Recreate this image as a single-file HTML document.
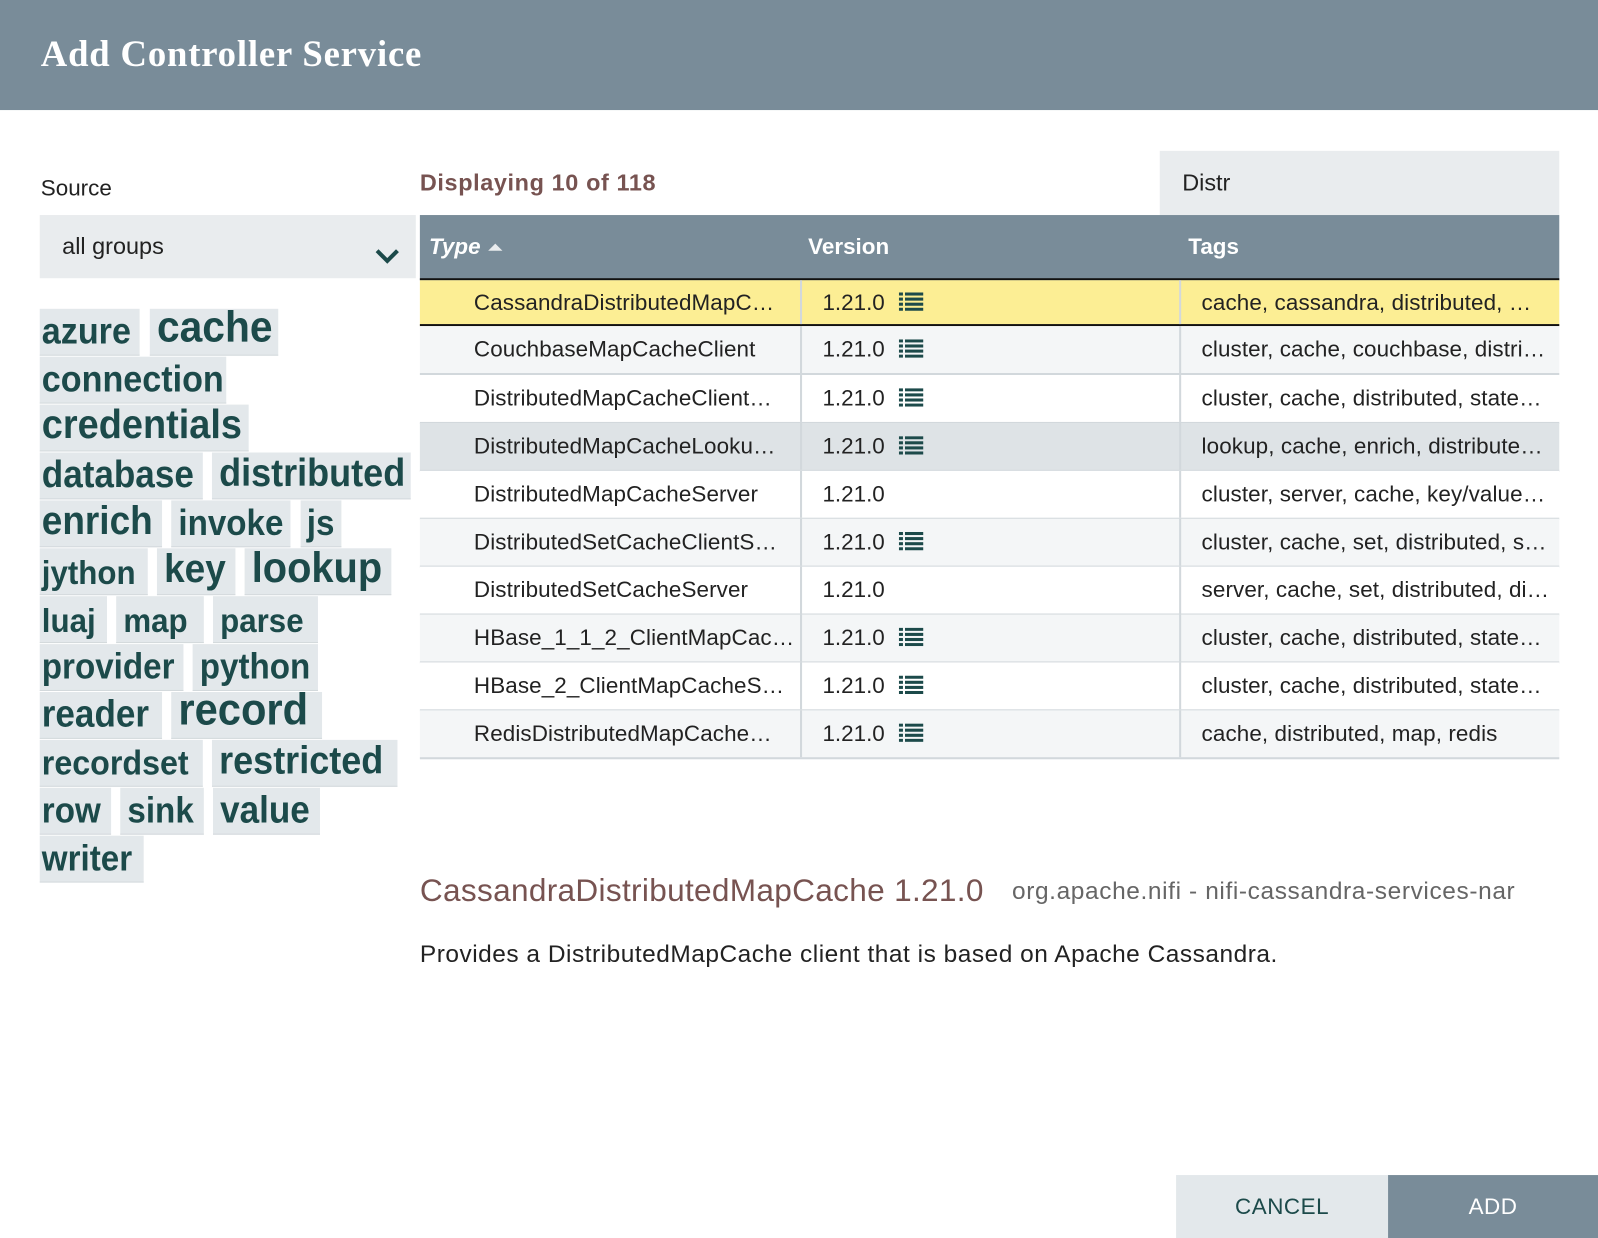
<!DOCTYPE html>
<html><head><meta charset="utf-8"><style>
html,body{margin:0;padding:0;background:#fff;overflow:hidden;width:1598px;height:1238px}
#w{position:absolute;left:0;top:0;width:1568px;height:1215px;transform:scale(1.01913);transform-origin:0 0;font-family:"Liberation Sans",sans-serif}
.a{position:absolute}
.hdr{left:0;top:0;width:1568px;height:108px;background:#798c99}
.title{left:40px;top:32px;color:#fff;font:bold 36px "Liberation Serif",serif;letter-spacing:0.8px}
.tag{position:absolute;background:#e3e8eb;height:45px;color:#1c4a4a;font-weight:bold;white-space:nowrap;overflow:visible;border-bottom:1px solid #d3d9dc}
.tag span{position:absolute;left:2px;bottom:5px;display:inline-block;transform:scaleX(0.93);transform-origin:0 100%;line-height:1}
.row{position:absolute;left:412px;width:1118px;height:46px;border-bottom:2px solid #d2d8dc;font-size:22px;color:#222}
.row div{position:absolute;top:0;line-height:46px;white-space:nowrap}
.c1{left:53px}.c2{left:395px}.c3{left:767px}
.c1,.c3{letter-spacing:0.1px}
.ic{display:inline-block;vertical-align:middle;margin-left:14px;margin-top:-4px}
.vl{position:absolute;top:0;width:2px;height:100%;background:#d2d8dc}
</style></head><body><div id="w">
<div class="a hdr"></div>
<div class="a title">Add Controller Service</div>

<div class="a" style="left:40px;top:172px;font-size:22px;color:#222">Source</div>
<div class="a" style="left:39px;top:211px;width:369px;height:62px;background:#e9ecee"></div>
<div class="a" style="left:61px;top:228px;font-size:23px;color:#222">all groups</div>
<svg class="a" style="left:368px;top:243px" width="24" height="16" viewBox="0 0 24 16"><path d="M2 3 L12 13 L22 3" fill="none" stroke="#1c4a4a" stroke-width="4"/></svg>

<div class="tag" style="left:39px;top:303px;width:98px"><span style="font-size:36px">azure</span></div>
<div class="tag" style="left:147px;top:303px;width:126px"><span style="font-size:43px;left:7px">cache</span></div>
<div class="tag" style="left:39px;top:350px;width:183px"><span style="font-size:36px">connection</span></div>
<div class="tag" style="left:39px;top:397px;width:205px"><span style="font-size:40px">credentials</span></div>
<div class="tag" style="left:39px;top:444px;width:160px"><span style="font-size:37px">database</span></div>
<div class="tag" style="left:208px;top:444px;width:195px"><span style="font-size:38px;left:7px">distributed</span></div>
<div class="tag" style="left:39px;top:491px;width:120px"><span style="font-size:39px">enrich</span></div>
<div class="tag" style="left:168px;top:491px;width:117px"><span style="font-size:35px;left:7px">invoke</span></div>
<div class="tag" style="left:295px;top:491px;width:40px"><span style="font-size:35px;left:6px">js</span></div>
<div class="tag" style="left:39px;top:538px;width:106px"><span style="font-size:33px">jython</span></div>
<div class="tag" style="left:154px;top:538px;width:77px"><span style="font-size:39px;left:7px">key</span></div>
<div class="tag" style="left:240px;top:538px;width:144px"><span style="font-size:42px;left:7px">lookup</span></div>
<div class="tag" style="left:39px;top:585px;width:66px"><span style="font-size:33px">luaj</span></div>
<div class="tag" style="left:114px;top:585px;width:86px"><span style="font-size:33px;left:7px">map</span></div>
<div class="tag" style="left:209px;top:585px;width:103px"><span style="font-size:33px;left:7px">parse</span></div>
<div class="tag" style="left:39px;top:632px;width:141px"><span style="font-size:35px">provider</span></div>
<div class="tag" style="left:189px;top:632px;width:123px"><span style="font-size:35px;left:7px">python</span></div>
<div class="tag" style="left:39px;top:679px;width:120px"><span style="font-size:37px">reader</span></div>
<div class="tag" style="left:168px;top:679px;width:148px"><span style="font-size:44px;left:7px">record</span></div>
<div class="tag" style="left:39px;top:726px;width:160px"><span style="font-size:34px">recordset</span></div>
<div class="tag" style="left:208px;top:726px;width:182px"><span style="font-size:38px;left:7px">restricted</span></div>
<div class="tag" style="left:39px;top:773px;width:70px"><span style="font-size:35px">row</span></div>
<div class="tag" style="left:118px;top:773px;width:82px"><span style="font-size:35px;left:7px">sink</span></div>
<div class="tag" style="left:209px;top:773px;width:105px"><span style="font-size:37px;left:7px">value</span></div>
<div class="tag" style="left:39px;top:820px;width:102px"><span style="font-size:35px">writer</span></div>

<div class="a" style="left:412px;top:166px;font-size:23px;color:#775351;font-weight:bold;letter-spacing:0.6px">Displaying 10 of 118</div>
<div class="a" style="left:1138px;top:148px;width:392px;height:63px;background:#e9ecee"></div>
<div class="a" style="left:1160px;top:166px;font-size:23px;color:#222">Distr</div>

<div class="a" style="left:412px;top:211px;width:1118px;height:62px;background:#798c99;border-bottom:2px solid #111"></div>
<div class="a" style="left:421px;top:229px;font-size:22px;color:#fff;font-style:italic;font-weight:bold">Type</div>
<svg class="a" style="left:478px;top:237px" width="16" height="10"><path d="M1 9 L8 2 L15 9Z" fill="#e9ecee"/></svg>
<div class="a" style="left:793px;top:229px;font-size:22px;color:#fff;font-weight:bold">Version</div>
<div class="a" style="left:1166px;top:229px;font-size:22px;color:#fff;font-weight:bold">Tags</div>

<div class="row" style="top:275px;height:43px;background:#fcee94;border-bottom:2px solid #111"><div class="c1" style="line-height:43px">CassandraDistributedMapC…</div><div class="c2" style="line-height:43px">1.21.0<svg class="ic" width="24" height="18"><g fill="#1c4a4a"><rect x="0" y="0" width="4" height="3"/><rect x="6" y="0" width="18" height="3"/><rect x="0" y="5" width="4" height="3"/><rect x="6" y="5" width="18" height="3"/><rect x="0" y="10" width="4" height="3"/><rect x="6" y="10" width="18" height="3"/><rect x="0" y="15" width="4" height="3"/><rect x="6" y="15" width="18" height="3"/></g></svg></div><div class="c3" style="line-height:43px">cache, cassandra, distributed, …</div><span class="vl" style="left:373px"></span><span class="vl" style="left:745px"></span></div>

<div class="row" style="top:320px;background:#f4f6f7"><div class="c1">CouchbaseMapCacheClient</div><div class="c2">1.21.0<svg class="ic" width="24" height="18"><g fill="#1c4a4a"><rect x="0" y="0" width="4" height="3"/><rect x="6" y="0" width="18" height="3"/><rect x="0" y="5" width="4" height="3"/><rect x="6" y="5" width="18" height="3"/><rect x="0" y="10" width="4" height="3"/><rect x="6" y="10" width="18" height="3"/><rect x="0" y="15" width="4" height="3"/><rect x="6" y="15" width="18" height="3"/></g></svg></div><div class="c3">cluster, cache, couchbase, distri…</div><span class="vl" style="left:373px"></span><span class="vl" style="left:745px"></span></div>

<div class="row" style="top:368px;background:#fff"><div class="c1">DistributedMapCacheClient…</div><div class="c2">1.21.0<svg class="ic" width="24" height="18"><g fill="#1c4a4a"><rect x="0" y="0" width="4" height="3"/><rect x="6" y="0" width="18" height="3"/><rect x="0" y="5" width="4" height="3"/><rect x="6" y="5" width="18" height="3"/><rect x="0" y="10" width="4" height="3"/><rect x="6" y="10" width="18" height="3"/><rect x="0" y="15" width="4" height="3"/><rect x="6" y="15" width="18" height="3"/></g></svg></div><div class="c3">cluster, cache, distributed, state…</div><span class="vl" style="left:373px"></span><span class="vl" style="left:745px"></span></div>

<div class="row" style="top:415px;background:#dee3e6"><div class="c1">DistributedMapCacheLooku…</div><div class="c2">1.21.0<svg class="ic" width="24" height="18"><g fill="#1c4a4a"><rect x="0" y="0" width="4" height="3"/><rect x="6" y="0" width="18" height="3"/><rect x="0" y="5" width="4" height="3"/><rect x="6" y="5" width="18" height="3"/><rect x="0" y="10" width="4" height="3"/><rect x="6" y="10" width="18" height="3"/><rect x="0" y="15" width="4" height="3"/><rect x="6" y="15" width="18" height="3"/></g></svg></div><div class="c3">lookup, cache, enrich, distribute…</div><span class="vl" style="left:373px"></span><span class="vl" style="left:745px"></span></div>

<div class="row" style="top:462px;background:#fff"><div class="c1">DistributedMapCacheServer</div><div class="c2">1.21.0</div><div class="c3">cluster, server, cache, key/value…</div><span class="vl" style="left:373px"></span><span class="vl" style="left:745px"></span></div>

<div class="row" style="top:509px;background:#f4f6f7"><div class="c1">DistributedSetCacheClientS…</div><div class="c2">1.21.0<svg class="ic" width="24" height="18"><g fill="#1c4a4a"><rect x="0" y="0" width="4" height="3"/><rect x="6" y="0" width="18" height="3"/><rect x="0" y="5" width="4" height="3"/><rect x="6" y="5" width="18" height="3"/><rect x="0" y="10" width="4" height="3"/><rect x="6" y="10" width="18" height="3"/><rect x="0" y="15" width="4" height="3"/><rect x="6" y="15" width="18" height="3"/></g></svg></div><div class="c3">cluster, cache, set, distributed, s…</div><span class="vl" style="left:373px"></span><span class="vl" style="left:745px"></span></div>

<div class="row" style="top:556px;background:#fff"><div class="c1">DistributedSetCacheServer</div><div class="c2">1.21.0</div><div class="c3">server, cache, set, distributed, di…</div><span class="vl" style="left:373px"></span><span class="vl" style="left:745px"></span></div>

<div class="row" style="top:603px;background:#f4f6f7"><div class="c1">HBase_1_1_2_ClientMapCac…</div><div class="c2">1.21.0<svg class="ic" width="24" height="18"><g fill="#1c4a4a"><rect x="0" y="0" width="4" height="3"/><rect x="6" y="0" width="18" height="3"/><rect x="0" y="5" width="4" height="3"/><rect x="6" y="5" width="18" height="3"/><rect x="0" y="10" width="4" height="3"/><rect x="6" y="10" width="18" height="3"/><rect x="0" y="15" width="4" height="3"/><rect x="6" y="15" width="18" height="3"/></g></svg></div><div class="c3">cluster, cache, distributed, state…</div><span class="vl" style="left:373px"></span><span class="vl" style="left:745px"></span></div>

<div class="row" style="top:650px;background:#fff"><div class="c1">HBase_2_ClientMapCacheS…</div><div class="c2">1.21.0<svg class="ic" width="24" height="18"><g fill="#1c4a4a"><rect x="0" y="0" width="4" height="3"/><rect x="6" y="0" width="18" height="3"/><rect x="0" y="5" width="4" height="3"/><rect x="6" y="5" width="18" height="3"/><rect x="0" y="10" width="4" height="3"/><rect x="6" y="10" width="18" height="3"/><rect x="0" y="15" width="4" height="3"/><rect x="6" y="15" width="18" height="3"/></g></svg></div><div class="c3">cluster, cache, distributed, state…</div><span class="vl" style="left:373px"></span><span class="vl" style="left:745px"></span></div>

<div class="row" style="top:697px;background:#f4f6f7"><div class="c1">RedisDistributedMapCache…</div><div class="c2">1.21.0<svg class="ic" width="24" height="18"><g fill="#1c4a4a"><rect x="0" y="0" width="4" height="3"/><rect x="6" y="0" width="18" height="3"/><rect x="0" y="5" width="4" height="3"/><rect x="6" y="5" width="18" height="3"/><rect x="0" y="10" width="4" height="3"/><rect x="6" y="10" width="18" height="3"/><rect x="0" y="15" width="4" height="3"/><rect x="6" y="15" width="18" height="3"/></g></svg></div><div class="c3">cache, distributed, map, redis</div><span class="vl" style="left:373px"></span><span class="vl" style="left:745px"></span></div>

<div class="a" style="left:412px;top:856px;font-size:31px;color:#775351;white-space:nowrap;letter-spacing:0.3px">CassandraDistributedMapCache 1.21.0</div>
<div class="a" style="left:993px;top:861px;font-size:24px;color:#666;white-space:nowrap;letter-spacing:0.6px">org.apache.nifi - nifi-cassandra-services-nar</div>
<div class="a" style="left:412px;top:923px;font-size:24px;color:#222;white-space:nowrap;letter-spacing:0.5px">Provides a DistributedMapCache client that is based on Apache Cassandra.</div>

<div class="a" style="left:1154px;top:1153px;width:208px;height:62px;background:#e3e8eb;color:#1c4a4a;font-size:22px;line-height:62px;text-align:center;letter-spacing:0.5px">CANCEL</div>
<div class="a" style="left:1362px;top:1153px;width:206px;height:62px;background:#798c99;color:#fff;font-size:22px;line-height:62px;text-align:center;letter-spacing:0.5px">ADD</div>
</div></body></html>
